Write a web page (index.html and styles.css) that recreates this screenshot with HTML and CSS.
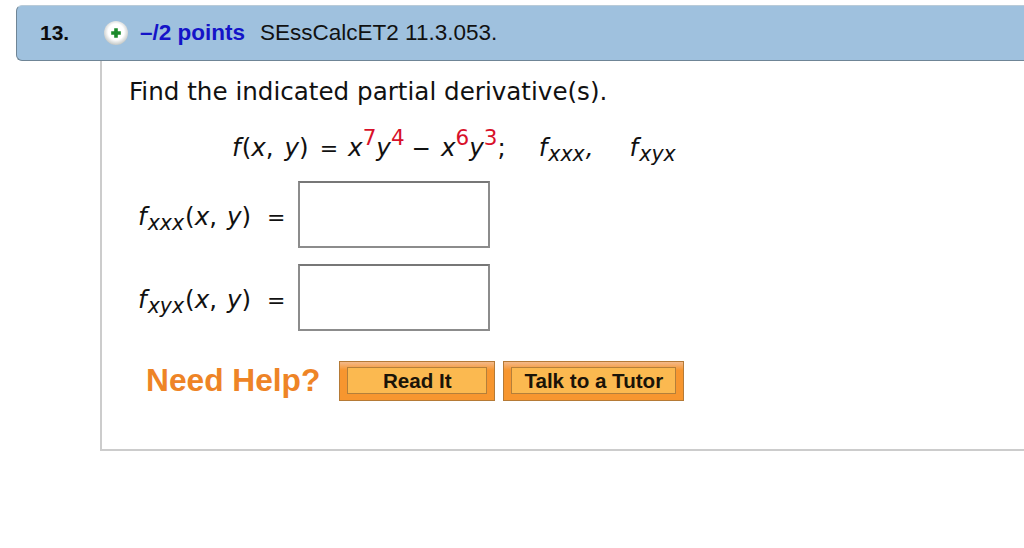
FILE: index.html
```html
<!DOCTYPE html>
<html lang="en">
<head>
<meta charset="utf-8">
<title>Question 13</title>
<link rel="stylesheet" href="styles.css">
</head>
<body>
<main class="question">
  <header class="bar">
    <span class="num">13.</span>
    <svg class="plus" width="26" height="26" viewBox="0 0 26 26" aria-hidden="true">
      <defs>
        <radialGradient id="disc" cx="50%" cy="45%" r="55%">
          <stop offset="0.6" stop-color="#ffffff"/>
          <stop offset="1" stop-color="#c4c8c6"/>
        </radialGradient>
      </defs>
      <circle cx="13" cy="13" r="12" fill="url(#disc)"/>
      <path d="M13 8.2v9.6M8.2 13h9.6" stroke="#1c8a2c" stroke-width="3.6" fill="none"/>
    </svg>
    <span class="points">–/2 points</span>
    <span class="code">SEssCalcET2 11.3.053.</span>
  </header>
  <section class="panel">
    <p class="prompt">Find the indicated partial derivative(s).</p>
    <p class="formula"><i>f</i><span class="args">(<i>x</i>, <i>y</i>)</span><span class="eq">=</span><i class="lead">x</i><sup>7</sup><i>y</i><sup>4</sup><span class="minus">−</span><i>x</i><sup>6</sup><i>y</i><sup>3</sup>;<span class="fn first"><i>f</i><sub>xxx</sub><i class="comma">,</i></span><span class="fn"><i>f</i><sub>xyx</sub></span></p>
    <div class="answer">
      <span class="label"><i>f</i><sub>xxx</sub><span class="args">(<i>x</i>, <i>y</i>)</span><span class="eq">=</span></span>
      <input class="box" type="text" aria-label="fxxx">
    </div>
    <div class="answer">
      <span class="label"><i>f</i><sub>xyx</sub><span class="args">(<i>x</i>, <i>y</i>)</span><span class="eq">=</span></span>
      <input class="box" type="text" aria-label="fxyx">
    </div>
    <div class="help">
      <span class="need">Need Help?</span>
      <button class="btn read" type="button"><span>Read It</span></button>
      <button class="btn talk" type="button"><span>Talk to a Tutor</span></button>
    </div>
  </section>
</main>
</body>
</html>
```
FILE: styles.css
```css
* { box-sizing: border-box; }
html, body { margin: 0; padding: 0; background: #fff; height: 100%; overflow: hidden; }
body { font-family: "DejaVu Sans", Verdana, sans-serif; color: #111; }
.question { padding: 5px 0 0 16px; }
.bar {
  display: flex;
  align-items: center;
  height: 56px;
  padding: 0 0 0 23px;
  background: #9fc1de;
  border: 1px solid #6f8596;
  border-right: 0;
  border-top-color: #b9cbd8;
  border-radius: 6px 0 0 6px;
  font-family: "Liberation Sans", Arial, sans-serif;
  font-size: 22.5px;
}
.num { font-weight: 700; font-size: 21px; width: 63px; color: #0c0c0c; }
.plus { margin-right: 11px; flex: none; }
.points { color: #1414c8; font-weight: 700; margin-right: 15px; }
.code { color: #111; }
.panel {
  margin-left: 84px;
  height: 390px;
  padding: 14px 0 0 27px;
  border-left: 2px solid #cccccc;
  border-bottom: 2px solid #cccccc;
}
.prompt { margin: 0; font-size: 24.6px; line-height: 34px; }
.formula {
  margin: 22px 0 0 103px;
  font-size: 24.6px;
  line-height: 34px;
  white-space: nowrap;
}
.args { word-spacing: 3px; padding: 0 1px; }
.eq { font-size: 22px; margin-left: 10px; margin-right: 10px; }
.minus { font-size: 23px; margin: 0 10px 0 7px; }
sup { color: #d8112a; font-size: 21.5px; line-height: 0; font-style: normal; vertical-align: 11px; }
sub { font-style: italic; font-size: 20.5px; line-height: 0; vertical-align: -5px; margin-left: 1px; }
.fn { margin-left: 36px; }
.fn.first { margin-left: 33px; }
.comma { margin-left: 1px; }
.answer { display: flex; align-items: center; height: 67px; margin-top: 16px; margin-left: 9px; }
.answer:first-of-type { margin-top: 15px; }
.label { display: block; width: 160px; margin-top: 4px; font-size: 24.6px; white-space: nowrap; }
.label .args { word-spacing: 2px; }
.label .eq { margin-left: 15px; margin-right: 0; }
.box { width: 192px; height: 67px; border: 2px solid #8c8c8c; border-top-color: #777; background: #fff; padding: 0; outline: 0; }
.help { display: flex; align-items: center; margin: 30px 0 0 17px; }
.need { font-family: "Liberation Sans", Arial, sans-serif; font-weight: 700; font-size: 31.7px; color: #ee8426; margin-right: 19px; margin-bottom: 2px; }
.btn {
  display: block;
  height: 40px;
  padding: 5px 7px 6px;
  background: linear-gradient(#f3b98a, #f7962f 22%, #f7962f 100%);
  border: 1px solid #b57a36;
  cursor: pointer;
}
.btn span {
  display: block;
  height: 100%;
  line-height: 26px;
  background: #fbb950;
  border: 1px solid #b47f3a;
  font-family: "Liberation Sans", Arial, sans-serif;
  font-weight: 700;
  font-size: 20.6px;
  color: #1a1408;
}
.read { width: 156px; margin-right: 8px; }
.talk { width: 181px; }
```
